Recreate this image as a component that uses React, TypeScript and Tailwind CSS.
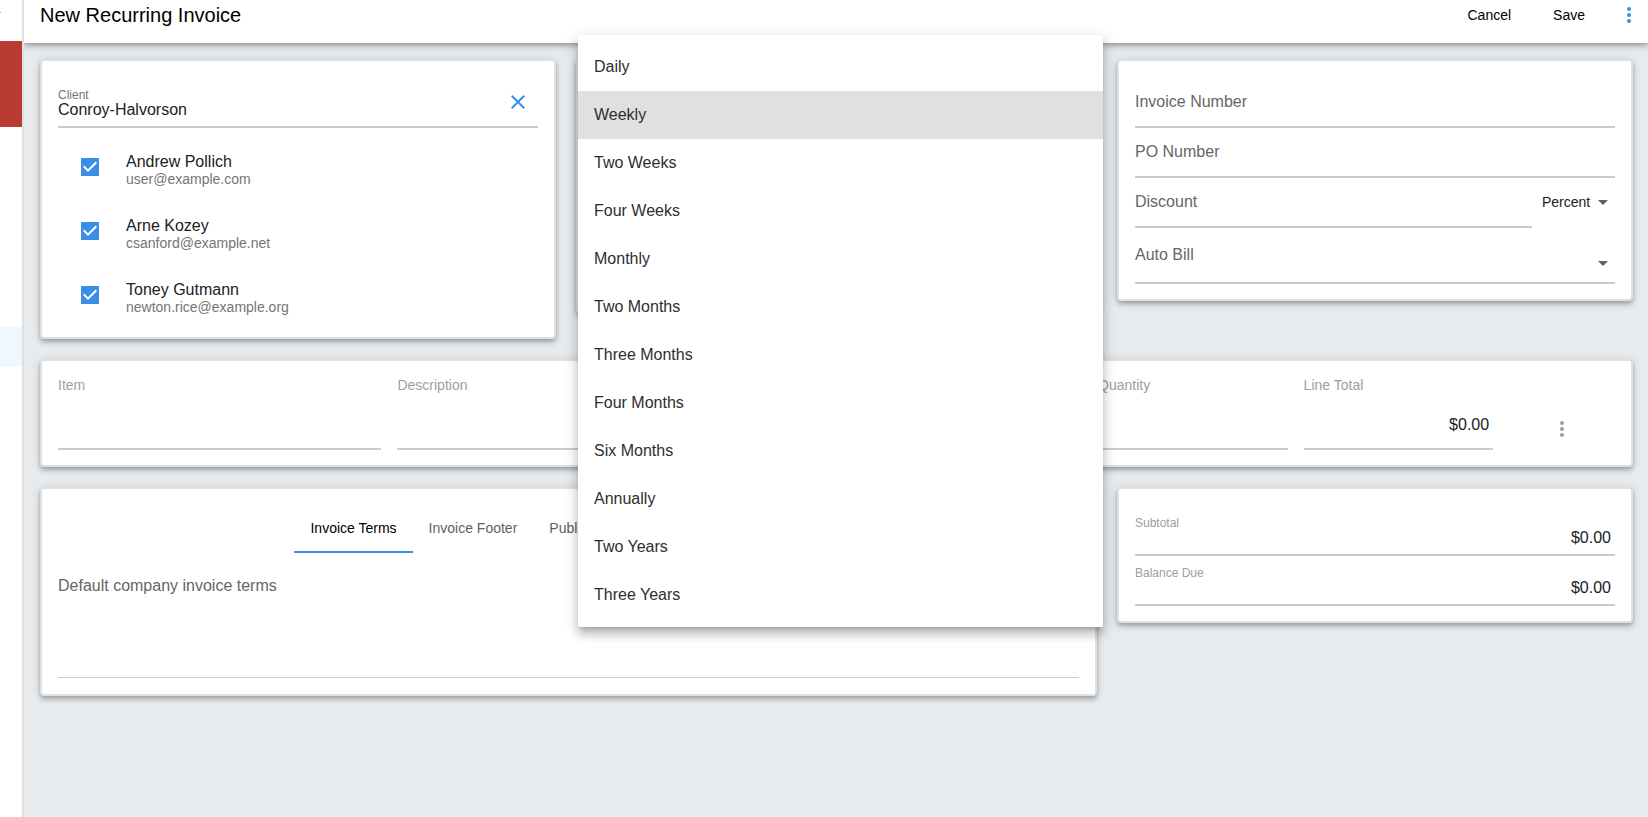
import { useState } from "react";
import type { ReactNode } from "react";

const CONTACTS = [
  { name: "Andrew Pollich", email: "user@example.com" },
  { name: "Arne Kozey", email: "csanford@example.net" },
  { name: "Toney Gutmann", email: "newton.rice@example.org" },
];

const FREQUENCIES = [
  "Daily",
  "Weekly",
  "Two Weeks",
  "Four Weeks",
  "Monthly",
  "Two Months",
  "Three Months",
  "Four Months",
  "Six Months",
  "Annually",
  "Two Years",
  "Three Years",
];

const TABS = ["Invoice Terms", "Invoice Footer", "Public Notes", "Private Notes", "Settings"];

function Card({ className, children }: { className: string; children?: ReactNode }) {
  return (
    <section
      className={`rounded border-2 border-[#e0e0e0] bg-white shadow-[0_2px_4px_-1px_rgba(0,0,0,0.2),0_4px_5px_0_rgba(0,0,0,0.14),0_1px_10px_0_rgba(0,0,0,0.12)] ${className}`}
    >
      {children}
    </section>
  );
}

function MoreIcon() {
  return (
    <svg viewBox="0 0 24 24" className="size-6" fill="currentColor" aria-hidden="true">
      <circle cx="12" cy="6" r="2" />
      <circle cx="12" cy="12" r="2" />
      <circle cx="12" cy="18" r="2" />
    </svg>
  );
}

function ArrowIcon({ className }: { className: string }) {
  return (
    <svg
      viewBox="0 0 24 24"
      className={`pointer-events-none absolute right-0 size-6 text-[#616161] ${className}`}
      fill="currentColor"
      aria-hidden="true"
    >
      <path d="M7 10l5 5 5-5z" />
    </svg>
  );
}

function TextField({ label }: { label: string }) {
  return (
    <input
      type="text"
      aria-label={label}
      placeholder={label}
      className="block h-[50px] w-full min-w-0 flex-1 border-b-2 border-[#cccccc] bg-transparent text-base outline-none placeholder:text-[#666666]"
    />
  );
}

function TotalField({ label, value }: { label: string; value: string }) {
  return (
    <div className="h-[50px] border-b-2 border-[#cccccc] pt-[11px]">
      <div className="mb-px text-xs leading-3 text-[#9e9e9e]">{label}</div>
      <div className="pr-1 text-right text-base leading-4">{value}</div>
    </div>
  );
}

function Contact({ name, email }: { name: string; email: string }) {
  return (
    <li>
      <label className="flex h-16 items-center gap-[27px] pl-[23px]">
        <span className="relative size-[18px]">
          <input
            type="checkbox"
            defaultChecked
            className="peer block size-[18px] appearance-none border-2 border-[#757575] checked:border-0 checked:bg-[#3a8ee6]"
          />
          <svg
            viewBox="3 3 18 18"
            className="pointer-events-none absolute inset-0 hidden size-[18px] text-white peer-checked:block"
            fill="currentColor"
            aria-hidden="true"
          >
            <path d="M10 17l-5-5 1.41-1.41L10 14.17l7.59-7.59L19 8l-9 9z" />
          </svg>
        </span>
        <span className="pt-1.5">
          <span className="block text-base leading-[18px]">{name}</span>
          <span className="block text-sm leading-4 text-[#757575]">{email}</span>
        </span>
      </label>
    </li>
  );
}

function LineItems() {
  const input = "block h-[50px] w-full border-b-2 border-[#cccccc] bg-transparent text-base outline-none";

  return (
    <Card className="col-span-3 px-4 pt-[14px] pb-[15px]">
      <table className="w-full table-fixed text-left">
        <thead>
          <tr className="text-sm leading-5 text-[#9e9e9e]">
            <th className="w-[21.8%] pb-[5px] font-normal">Item</th>
            <th className="pb-[5px] font-normal">Description</th>
            <th className="w-[13.2%] pb-[5px] font-normal">Unit Cost</th>
            <th className="w-[13.2%] pb-[5px] font-normal">Quantity</th>
            <th className="w-[13.2%] pb-[5px] font-normal">Line Total</th>
            <th className="w-[6.8%]" />
          </tr>
        </thead>
        <tbody>
          <tr>
            <td className="pr-4">
              <input aria-label="Item" className={input} />
            </td>
            <td className="pr-4">
              <input aria-label="Description" className={input} />
            </td>
            <td className="pr-4">
              <input aria-label="Unit Cost" className={input} />
            </td>
            <td className="pr-4">
              <input aria-label="Quantity" className={input} />
            </td>
            <td className="pr-4">
              <div className="h-[50px] border-b-2 border-[#cccccc] pr-1 text-right text-base leading-[50px]">
                $0.00
              </div>
            </td>
            <td>
              <button type="button" aria-label="Line actions" className="mx-auto mt-2 block text-[#9e9e9e]">
                <MoreIcon />
              </button>
            </td>
          </tr>
        </tbody>
      </table>
    </Card>
  );
}

function Notes() {
  const [tab, setTab] = useState("Invoice Terms");

  return (
    <Card className="col-span-2 p-4">
      <div role="tablist" className="flex justify-center">
        {TABS.map((name) => (
          <button
            key={name}
            type="button"
            role="tab"
            aria-selected={name === tab}
            onClick={() => setTab(name)}
            className={`h-12 border-b-2 px-4 text-sm ${
              name === tab ? "border-[#3a8ee6] text-black" : "border-transparent text-[#616161]"
            }`}
          >
            {name}
          </button>
        ))}
      </div>
      <textarea
        aria-label={tab}
        placeholder="Default company invoice terms"
        className="block h-[125px] w-full resize-none border-b border-[#cccccc] pt-[21px] text-base outline-none placeholder:text-[#666666]"
      />
    </Card>
  );
}

export default function App() {
  const [frequency, setFrequency] = useState("Weekly");

  return (
    <div className="flex min-h-screen bg-[#e7ebee] font-['Liberation_Sans',Arial,sans-serif] text-[#212121]">
      <aside className="relative z-20 w-6 shrink-0 border-r-2 border-[#e0e0e0] bg-white pt-3">
        <div className="h-px w-px bg-[#7fa9e0]" />
        <div className="mt-7 h-[86px] bg-[#b73b30]" />
        <div className="mt-[200px] h-10 bg-[#f0f8ff]" />
      </aside>

      <div className="min-w-0 flex-1">
        <header className="relative z-10 flex bg-white pr-[7px] pb-[13px] pl-4 text-black shadow-[0_2px_4px_-1px_rgba(0,0,0,0.2),0_4px_5px_0_rgba(0,0,0,0.14),0_1px_10px_0_rgba(0,0,0,0.12)]">
          <h1 className="flex-1 text-xl leading-[30px]">New Recurring Invoice</h1>
          <button type="button" className="text-sm">
            Cancel
          </button>
          <button type="button" className="mr-8 ml-[42px] text-sm">
            Save
          </button>
          <button type="button" aria-label="More actions" className="text-[#3a8ee6]">
            <MoreIcon />
          </button>
        </header>

        <main className="grid grid-cols-[516fr_521fr_516fr] items-start gap-5 py-4 pr-[15px] pl-4">
          <Card className="px-4 pt-[17px] pb-[10px]">
            <div className="flex h-[50px] items-center border-b-2 border-[#cccccc] pr-2">
              <div className="flex h-12 min-w-0 flex-1 flex-col pt-[11px]">
                <label htmlFor="client" className="mb-px text-xs leading-3 text-[#757575]">
                  Client
                </label>
                <input
                  id="client"
                  defaultValue="Conroy-Halvorson"
                  className="h-4 text-base leading-4 outline-none"
                />
              </div>
              <button type="button" aria-label="Clear client" className="text-[#3a8ee6]">
                <svg viewBox="0 0 24 24" className="size-6" fill="currentColor" aria-hidden="true">
                  <path d="M19 6.41L17.59 5 12 10.59 6.41 5 5 6.41 10.59 12 5 17.59 6.41 19 12 13.41 17.59 19 19 17.59 13.41 12z" />
                </svg>
              </button>
            </div>
            <ul className="pt-[7px]">
              {CONTACTS.map((contact) => (
                <Contact key={contact.email} {...contact} />
              ))}
            </ul>
          </Card>

          <Card className="relative min-h-[254px]">
            {/* open frequency menu, wider than the card it drops from */}
            <ul
              role="listbox"
              aria-label="Frequency"
              className="absolute -top-[26px] -right-2 left-0 z-20 rounded-xs bg-white py-2 shadow-[0_5px_5px_-3px_rgba(0,0,0,0.2),0_8px_10px_1px_rgba(0,0,0,0.14),0_3px_14px_2px_rgba(0,0,0,0.12)]"
            >
              {FREQUENCIES.map((name) => (
                <li key={name} role="option" aria-selected={name === frequency}>
                  <button
                    type="button"
                    onClick={() => setFrequency(name)}
                    className={`block h-12 w-full px-4 text-left text-base text-[#2e2e2e] ${
                      name === frequency ? "bg-[#e0e0e0]" : ""
                    }`}
                  >
                    {name}
                  </button>
                </li>
              ))}
            </ul>
          </Card>

          <Card className="px-4 pt-[17px] pb-[15px]">
            <TextField label="Invoice Number" />
            <TextField label="PO Number" />
            <div className="flex gap-[10px]">
              <TextField label="Discount" />
              <div className="relative w-[73px]">
                <select
                  aria-label="Discount type"
                  className="h-12 w-full appearance-none bg-transparent text-sm outline-none"
                >
                  <option>Percent</option>
                  <option>Amount</option>
                </select>
                <ArrowIcon className="top-3" />
              </div>
            </div>
            <div className="relative border-b-2 border-[#cccccc]">
              <select
                aria-label="Auto Bill"
                className="block h-[54px] w-full appearance-none bg-transparent text-base text-[#666666] outline-none"
              >
                <option>Auto Bill</option>
              </select>
              <ArrowIcon className="bottom-[7px]" />
            </div>
          </Card>

          <LineItems />

          <Notes />

          <Card className="px-4 pt-[17px] pb-[15px]">
            <TotalField label="Subtotal" value="$0.00" />
            <TotalField label="Balance Due" value="$0.00" />
          </Card>
        </main>
      </div>
    </div>
  );
}
